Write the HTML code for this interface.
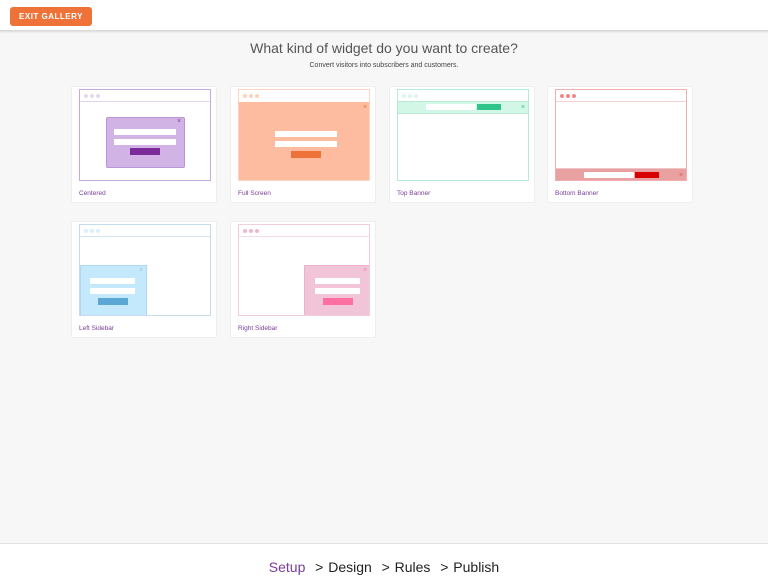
<!DOCTYPE html>
<html><head><meta charset="utf-8"><style>
*{margin:0;padding:0;box-sizing:border-box}
body{width:768px;height:585px;background:#f7f7f7;font-family:"Liberation Sans",sans-serif;position:relative;overflow:hidden}
.a{position:absolute}
.hdr{left:0;top:0;width:768px;height:31px;background:#fff;border-bottom:1px solid #d8d8d8;box-shadow:0 1px 2px rgba(0,0,0,.12)}
.btn{left:10px;top:7px;width:82px;height:19px;background:#ef7338;border-radius:3px;color:#fff;font-size:8px;font-weight:bold;letter-spacing:.5px;text-align:center;line-height:19px}
.card{width:146px;height:117px;background:#fff;border:1px solid #eee;border-radius:2px}
.fr{left:7px;top:2px;width:132px;height:92px;background:#fff;border:1px solid;overflow:hidden}
.bar{left:0;top:0;width:100%;height:12px;border-bottom:1px solid}
.dot{top:4px;width:4px;height:4px;border-radius:50%}
.lbl{left:7px;top:103px;font-size:6.5px;color:#7a3c98}
.in{background:#fff}
.x{font-size:7px;line-height:7px}
</style></head><body>
<div class="a hdr"></div>
<div class="a btn">EXIT GALLERY</div>
<div class="a" style="left:0;width:768px;top:40px;text-align:center;font-size:14px;color:#555">What kind of widget do you want to create?</div>
<div class="a" style="left:0;width:768px;top:62px;text-align:center;font-size:7px;color:#444">Convert visitors into subscribers and customers.</div>

<!-- Centered -->
<div class="a card" style="left:71px;top:86px">
 <div class="a fr" style="border-color:#c7a9dc">
  <div class="a bar" style="border-color:#e4d4ee"></div>
  <div class="a dot" style="left:4px;background:#e4d6ef"></div><div class="a dot" style="left:10px;background:#e4d6ef"></div><div class="a dot" style="left:16px;background:#e4d6ef"></div>
  <div class="a" style="left:26px;top:27px;width:79px;height:51px;background:#d2b3e6;border:1px solid #b995d4;border-radius:2px"></div>
  <div class="a x" style="left:97px;top:28px;color:#7a3c98">×</div>
  <div class="a in" style="left:34px;top:39px;width:62px;height:6px"></div>
  <div class="a in" style="left:34px;top:49px;width:62px;height:6px"></div>
  <div class="a" style="left:50px;top:58px;width:30px;height:7px;background:#7b2c99"></div>
 </div>
 <div class="a lbl">Centered</div>
</div>

<!-- Full Screen -->
<div class="a card" style="left:230px;top:86px">
 <div class="a fr" style="border-color:#fbd4c2">
  <div class="a dot" style="left:4px;background:#fbd3c0"></div><div class="a dot" style="left:10px;background:#fbd3c0"></div><div class="a dot" style="left:16px;background:#fbd3c0"></div>
  <div class="a" style="left:0;top:12px;width:133px;height:80px;background:#fdbba0"></div>
  <div class="a x" style="left:124px;top:14px;color:#ef7338">×</div>
  <div class="a in" style="left:36px;top:41px;width:62px;height:6px"></div>
  <div class="a in" style="left:36px;top:51px;width:62px;height:6px"></div>
  <div class="a" style="left:52px;top:61px;width:30px;height:7px;background:#ef7338"></div>
 </div>
 <div class="a lbl">Full Screen</div>
</div>

<!-- Top Banner -->
<div class="a card" style="left:389px;top:86px">
 <div class="a fr" style="border-color:#b6ead4">
  <div class="a dot" style="left:4px;background:#dcf6ea"></div><div class="a dot" style="left:10px;background:#dcf6ea"></div><div class="a dot" style="left:16px;background:#dcf6ea"></div>
  <div class="a" style="left:0;top:11px;width:133px;height:13px;background:#d2f7e7;border-bottom:1px solid #b6ead4;border-top:1px solid #b6ead4"></div>
  <div class="a in" style="left:28px;top:14px;width:50px;height:6px"></div>
  <div class="a" style="left:79px;top:14px;width:24px;height:6px;background:#2fc48a"></div>
  <div class="a x" style="left:123px;top:14px;color:#2fc48a">×</div>
 </div>
 <div class="a lbl">Top Banner</div>
</div>

<!-- Bottom Banner -->
<div class="a card" style="left:547px;top:86px">
 <div class="a fr" style="border-color:#efafaf">
  <div class="a bar" style="border-color:#f6d0d0"></div>
  <div class="a dot" style="left:4px;background:#ea8a8a"></div><div class="a dot" style="left:10px;background:#ea8a8a"></div><div class="a dot" style="left:16px;background:#ea8a8a"></div>
  <div class="a" style="left:0;top:78px;width:133px;height:14px;background:#e8a0a0;border-top:1px solid #f0c4c4"></div>
  <div class="a in" style="left:28px;top:82px;width:50px;height:6px"></div>
  <div class="a" style="left:79px;top:82px;width:24px;height:6px;background:#d80000"></div>
  <div class="a x" style="left:123px;top:82px;color:#d85c5c">×</div>
 </div>
 <div class="a lbl">Bottom Banner</div>
</div>

<!-- Left Sidebar -->
<div class="a card" style="left:71px;top:221px">
 <div class="a fr" style="border-color:#c4dcec">
  <div class="a bar" style="border-color:#d2e6f2"></div>
  <div class="a dot" style="left:4px;background:#d6efff"></div><div class="a dot" style="left:10px;background:#d6efff"></div><div class="a dot" style="left:16px;background:#d6efff"></div>
  <div class="a" style="left:0;top:40px;width:67px;height:52px;background:#c5e9fc;border:1px solid #b0d8ee"></div>
  <div class="a x" style="left:59px;top:42px;color:#9cc8de">×</div>
  <div class="a in" style="left:10px;top:53px;width:45px;height:6px"></div>
  <div class="a in" style="left:10px;top:63px;width:45px;height:6px"></div>
  <div class="a" style="left:18px;top:73px;width:30px;height:7px;background:#5ba7d6"></div>
 </div>
 <div class="a lbl">Left Sidebar</div>
</div>

<!-- Right Sidebar -->
<div class="a card" style="left:230px;top:221px">
 <div class="a fr" style="border-color:#f4cddd">
  <div class="a bar" style="border-color:#f6dbe6"></div>
  <div class="a dot" style="left:4px;background:#f0b6cc"></div><div class="a dot" style="left:10px;background:#f0b6cc"></div><div class="a dot" style="left:16px;background:#f0b6cc"></div>
  <div class="a" style="left:65px;top:40px;width:67px;height:52px;background:#f2c4d8;border:1px solid #ecb4cb"></div>
  <div class="a x" style="left:124px;top:42px;color:#e98bb0">×</div>
  <div class="a in" style="left:76px;top:53px;width:45px;height:6px"></div>
  <div class="a in" style="left:76px;top:63px;width:45px;height:6px"></div>
  <div class="a" style="left:84px;top:73px;width:30px;height:7px;background:#ff6ea0"></div>
 </div>
 <div class="a lbl">Right Sidebar</div>
</div>

<div class="a" style="left:0;top:543px;width:768px;height:42px;background:#fff;border-top:1px solid #e2e2e2"></div>
<div class="a" style="left:0;width:768px;top:559px;text-align:center;font-size:14px;color:#222;word-spacing:1px"><span style="color:#7a3c98">Setup</span> &nbsp;&gt; Design &nbsp;&gt; Rules &nbsp;&gt; Publish</div>
</body></html>
